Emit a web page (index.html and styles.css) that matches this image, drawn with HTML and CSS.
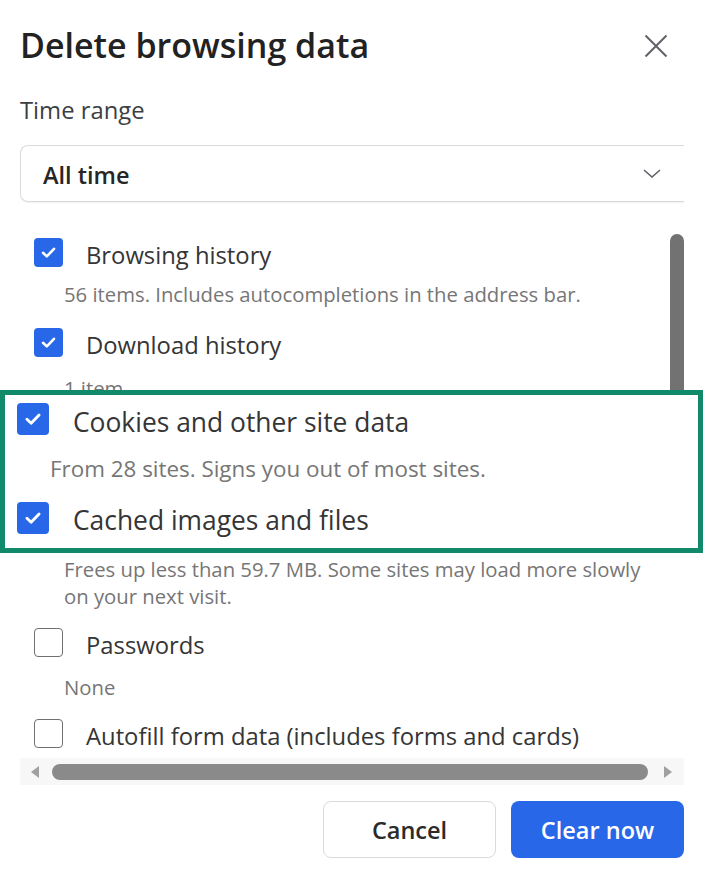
FILE: index.html
```html
<!DOCTYPE html>
<html lang="en">
<head>
<meta charset="utf-8">
<title>Delete browsing data</title>
<link rel="stylesheet" href="styles.css">
</head>
<body>
<div class="dialog">
  <div class="header">
    <h1 class="title">Delete browsing data</h1>
    <svg class="close" viewBox="0 0 24 24" aria-label="Close"><path d="M1.5 1.5 L22.5 22.5 M22.5 1.5 L1.5 22.5"/></svg>
  </div>

  <div class="range-label">Time range</div>
  <div class="select">
    <span class="select-value">All time</span>
    <svg class="chevron" viewBox="0 0 18 9"><path d="M1 1 L9 8 L17 1"/></svg>
  </div>

  <div class="top-section">
    <div class="items">
      <div class="row">
        <span class="cb on"><svg viewBox="0 0 29 29"><path d="M9 14.8 L12.8 18.4 L20 10.8"/></svg></span>
        <span class="label">Browsing history</span>
      </div>
      <div class="sub sub-1">56 items. Includes autocompletions in the address bar.</div>
      <div class="row row-2">
        <span class="cb on"><svg viewBox="0 0 29 29"><path d="M9 14.8 L12.8 18.4 L20 10.8"/></svg></span>
        <span class="label">Download history</span>
      </div>
      <div class="sub sub-2">1 item</div>
    </div>
    <div class="vthumb"></div>
  </div>

  <div class="highlight">
    <div class="row big">
      <span class="cb on"><svg viewBox="0 0 29 29"><path d="M9 14.8 L12.8 18.4 L20 10.8"/></svg></span>
      <span class="label">Cookies and other site data</span>
    </div>
    <div class="sub big">From 28 sites. Signs you out of most sites.</div>
    <div class="row big row-b">
      <span class="cb on"><svg viewBox="0 0 29 29"><path d="M9 14.8 L12.8 18.4 L20 10.8"/></svg></span>
      <span class="label">Cached images and files</span>
    </div>
  </div>

  <div class="sub wrap">Frees up less than 59.7 MB. Some sites may load more slowly on your next visit.</div>
  <div class="row row-pw">
    <span class="cb off"></span>
    <span class="label">Passwords</span>
  </div>
  <div class="sub sub-none">None</div>
  <div class="row row-af">
    <span class="cb off"></span>
    <span class="label">Autofill form data (includes forms and cards)</span>
  </div>

  <div class="hscroll">
    <svg class="arrow" viewBox="0 0 8 12"><polygon points="8,0 8,12 0,6"/></svg>
    <div class="hthumb"></div>
    <svg class="arrow" viewBox="0 0 8 12"><polygon points="0,0 0,12 8,6"/></svg>
  </div>

  <div class="actions">
    <button class="btn cancel">Cancel</button>
    <button class="btn primary">Clear now</button>
  </div>
</div>
</body>
</html>
```

FILE: styles.css
```css
html, body {
  margin: 0;
  padding: 0;
  background: #ffffff;
}

body {
  width: 704px;
  overflow: hidden;
  font-family: "Open Sans", "Noto Sans", sans-serif;
  color: #3a3a3a;
}

.dialog {
  padding: 25px 20px 0 20px;
}

.header {
  display: flex;
  justify-content: space-between;
  align-items: flex-start;
}

.title {
  margin: 0;
  font-size: 34px;
  font-weight: 600;
  line-height: 40px;
  color: #222222;
}

.close {
  width: 24px;
  height: 24px;
  margin-top: 9px;
  margin-right: 16px;
  fill: none;
  stroke: #5f6368;
  stroke-width: 2;
}

.range-label {
  margin-top: 30px;
  font-size: 23.8px;
  line-height: 30px;
  color: #3c4043;
}

.select {
  margin-top: 20px;
  height: 57px;
  box-sizing: border-box;
  border: 1px solid #dadada;
  border-right: none;
  border-radius: 8px 0 0 8px;
  box-shadow: 0 1px 1px rgba(0, 0, 0, 0.06);
  display: flex;
  align-items: center;
  justify-content: space-between;
  padding: 0 23px 0 22px;
}

.select-value {
  font-size: 23.5px;
  font-weight: 600;
  line-height: 30px;
  color: #262626;
  margin-top: 2px;
}

.chevron {
  width: 18px;
  height: 9px;
  fill: none;
  stroke: #5f6368;
  stroke-width: 1.6;
}

.top-section {
  margin-top: 28px;
  height: 160px;
  display: flex;
  overflow: hidden;
}

.items {
  flex: 1;
}

.vthumb {
  width: 14px;
  margin-top: 4px;
  background: #727272;
  border-radius: 7px 7px 0 0;
}

.row {
  display: flex;
  align-items: flex-start;
  height: 44px;
  padding-left: 14px;
}

.cb {
  width: 29px;
  height: 29px;
  margin-top: 8px;
  border-radius: 4px;
  flex-shrink: 0;
  box-sizing: border-box;
}

.cb svg {
  display: block;
  width: 100%;
  height: 100%;
  fill: none;
  stroke: #ffffff;
  stroke-width: 2.6;
  stroke-linecap: round;
  stroke-linejoin: round;
}

.cb.on {
  background: #2767e8;
}

.cb.off {
  background: #ffffff;
  border: 1.5px solid #707070;
}

.label {
  margin-left: 23px;
  margin-top: 10px;
  font-size: 23.8px;
  line-height: 30px;
  color: #353535;
  white-space: nowrap;
}

.sub {
  padding-left: 44px;
  font-size: 20.3px;
  line-height: 26px;
  color: #767676;
}

.sub-1 {
  margin-top: 7px;
}

.row-2 {
  margin-top: 13px;
}

.sub-2 {
  margin-top: 11px;
}

.highlight {
  margin: 0 -19px 0 -20px;
  height: 163px;
  box-sizing: border-box;
  border: 5px solid #118a6c;
  padding-left: 12px;
  position: relative;
}

.row.big {
  height: 48px;
  padding-left: 0;
}

.row.big .cb {
  width: 32px;
  height: 32px;
}

.row.big .label {
  margin-left: 24px;
  margin-top: 10px;
  font-size: 26.4px;
  line-height: 34px;
}

.sub.big {
  padding-left: 33px;
  margin-top: 12px;
  font-size: 22.4px;
  line-height: 28px;
}

.row.row-b {
  margin-top: 11px;
}

.row.row-b .label {
  margin-top: 9px;
}

.sub.wrap {
  margin-top: 3px;
  line-height: 27px;
  padding-right: 30px;
}

.row-pw {
  margin-top: 10px;
}

.sub-none {
  margin-top: 10px;
}

.row-af {
  margin-top: 11px;
}

.hscroll {
  margin-top: 3px;
  height: 27px;
  background: #f7f7f7;
  display: flex;
  align-items: center;
  padding: 0 12px 0 11px;
  gap: 13px;
}

.arrow {
  width: 8px;
  height: 12px;
  fill: #a0a0a0;
  flex-shrink: 0;
}

.hthumb {
  flex: 1;
  height: 16px;
  border-radius: 8px;
  background: #8a8a8a;
}

.hscroll .arrow:last-child {
  margin-left: 3px;
}

.actions {
  margin-top: 16px;
  display: flex;
  justify-content: flex-end;
  gap: 15px;
}

.btn {
  width: 173px;
  height: 57px;
  border-radius: 8px;
  font-family: "Open Sans", "Noto Sans", sans-serif;
  font-size: 23.5px;
  font-weight: 600;
  cursor: pointer;
}

.btn.cancel {
  background: #ffffff;
  border: 1px solid #dadada;
  color: #2b2b2b;
}

.btn.primary {
  background: #2767e8;
  border: none;
  color: #ffffff;
}
```
